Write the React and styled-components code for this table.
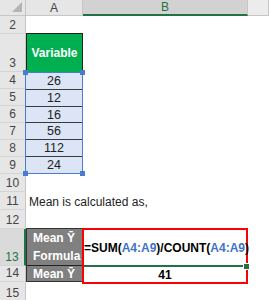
import React from "react";
import styled, { createGlobalStyle } from "styled-components";

const GlobalStyle = createGlobalStyle`
  html, body {
    margin: 0;
    padding: 0;
    background: #fff;
  }
  body {
    font-family: "Liberation Sans", Arial, sans-serif;
  }
`;

const Sheet = styled.div`
  display: grid;
  grid-template-columns: 26px 57px 165px 1fr;
  grid-template-rows: 16px 18px 38px repeat(6, 17px) 18px 18px 19px 37px 16px 20px;
  width: 269px;
  height: 300px;
  overflow: hidden;
  font-size: 11.5px;
  color: #222;
`;

const Corner = styled.div`
  grid-row: 1;
  grid-column: 1;
  background: #e6e6e6;
  border-right: 1px solid #c6c6c6;
  border-bottom: 1px solid #c6c6c6;
  position: relative;
  &::after {
    content: "";
    position: absolute;
    right: 3px;
    bottom: 3px;
    border-left: 10px solid transparent;
    border-bottom: 10px solid #b4b4b4;
  }
`;

const ColHeader = styled.div`
  grid-row: 1;
  grid-column: ${(p) => p.$col};
  display: flex;
  align-items: center;
  justify-content: center;
  background: ${(p) => (p.$selected ? "#d2d2d2" : p.$faint ? "#ececec" : "#e6e6e6")};
  color: ${(p) => (p.$selected ? "#217346" : "#444")};
  border-right: 1px solid #c6c6c6;
  border-bottom: ${(p) => (p.$selected ? "2px solid #217346" : "1px solid #c6c6c6")};
  box-sizing: border-box;
  font-size: 12px;
`;

const RowHeader = styled.div`
  grid-row: ${(p) => p.$row};
  grid-column: 1;
  display: flex;
  align-items: flex-end;
  justify-content: center;
  padding-bottom: 1px;
  box-sizing: border-box;
  background: ${(p) => (p.$selected ? "#dadada" : "#e6e6e6")};
  color: ${(p) => (p.$selected ? "#217346" : "#444")};
  border-right: ${(p) => (p.$selected ? "2px solid #217346" : "1px solid #c6c6c6")};
  border-bottom: 1px solid #d4d4d4;
  font-size: 12px;
`;

const HeadCell = styled.div`
  grid-row: 3;
  grid-column: 2;
  background: #00b050;
  color: #fff;
  font-weight: bold;
  font-size: 12px;
  display: flex;
  align-items: center;
  justify-content: center;
  border: 1px solid #222;
  border-bottom: none;
  margin-top: -1px;
`;

const RangeBox = styled.div`
  grid-row: 4 / span 6;
  grid-column: 2;
  display: flex;
  flex-direction: column;
  border: 1px solid #4a7bd0;
  margin-left: -1px;
  position: relative;
  background: #dbe5f5;
`;

const Handle = styled.span`
  position: absolute;
  width: 5px;
  height: 5px;
  background: #4a7bd0;
  ${(p) => (p.$top ? "top: -3px;" : "bottom: -3px;")}
  ${(p) => (p.$left ? "left: -3px;" : "right: -3px;")}
`;

const DataCell = styled.div`
  flex: 1;
  display: flex;
  align-items: center;
  justify-content: center;
  border-bottom: 1px solid #3a3a3a;
  font-size: 12.5px;
  &:last-of-type {
    border-bottom: none;
  }
`;

const Note = styled.div`
  grid-row: 11;
  grid-column: 2 / span 3;
  display: flex;
  align-items: flex-end;
  padding: 0 0 1px 3px;
  font-size: 12px;
  white-space: nowrap;
`;

const LabelStack = styled.div`
  grid-row: 13 / span 2;
  grid-column: 2;
  display: flex;
  flex-direction: column;
  background: #808080;
  border: 1px solid #333;
  margin-top: -1px;
`;

const LabelCell = styled.div`
  height: ${(p) => p.$h}px;
  display: flex;
  flex-direction: column;
  justify-content: center;
  padding-left: 6px;
  color: #fff;
  font-weight: bold;
  font-size: 12px;
  line-height: ${(p) => (p.$h > 20 ? 18 : 16)}px;
  border-top: ${(p) => (p.$divider ? "1px solid #222" : "none")};
`;

const FormulaBox = styled.div`
  grid-row: 13 / span 2;
  grid-column: 3;
  display: flex;
  flex-direction: column;
  border: 2px solid #f00;
  margin: -1px 0 -2px -1px;
  position: relative;
`;

const FormulaCell = styled.div`
  flex: 1;
  display: flex;
  align-items: center;
  font-weight: bold;
  font-size: 12px;
  color: #000;
  border-bottom: 2px solid #217346;
  margin-right: 1px;
  white-space: nowrap;
`;

const Ref = styled.span`
  color: #3f72c8;
`;

const Caret = styled.span`
  display: inline-block;
  width: 1px;
  height: 15px;
  background: #333;
  margin-left: 1px;
`;

const FillHandle = styled.span`
  position: absolute;
  right: -4px;
  top: 33px;
  width: 5px;
  height: 5px;
  background: #217346;
  border: 1px solid #fff;
`;

const ResultCell = styled.div`
  height: 15px;
  display: flex;
  align-items: center;
  justify-content: center;
  font-weight: bold;
  font-size: 12px;
  color: #000;
`;

const rowNums = [2, 3, 4, 5, 6, 7, 8, 9, 10, 11, 12, 13, 14, 15];
const values = [26, 12, 16, 56, 112, 24];

export default function App() {
  return (
    <>
      <GlobalStyle />
      <Sheet>
        <Corner />
        <ColHeader $col={2}>A</ColHeader>
        <ColHeader $col={3} $selected>
          B
        </ColHeader>
        <ColHeader $col={4} $faint />
        {rowNums.map((n, i) => (
          <RowHeader key={n} $row={i + 2} $selected={n === 13}>
            {n}
          </RowHeader>
        ))}
        <HeadCell>Variable</HeadCell>
        <RangeBox>
          {values.map((v) => (
            <DataCell key={v}>{v}</DataCell>
          ))}
          <Handle $top $left />
          <Handle $top />
          <Handle $left />
          <Handle />
        </RangeBox>
        <Note>Mean is calculated as,</Note>
        <LabelStack>
          <LabelCell $h={36}>
            <span>Mean Ȳ</span>
            <span>Formula</span>
          </LabelCell>
          <LabelCell $h={16} $divider>
            Mean Ȳ
          </LabelCell>
        </LabelStack>
        <FormulaBox>
          <FormulaCell>
            =SUM(<Ref>A4:A9</Ref>)/COUNT(<Ref>A4:A9</Ref>)
            <Caret />
          </FormulaCell>
          <ResultCell>41</ResultCell>
          <FillHandle />
        </FormulaBox>
      </Sheet>
    </>
  );
}
